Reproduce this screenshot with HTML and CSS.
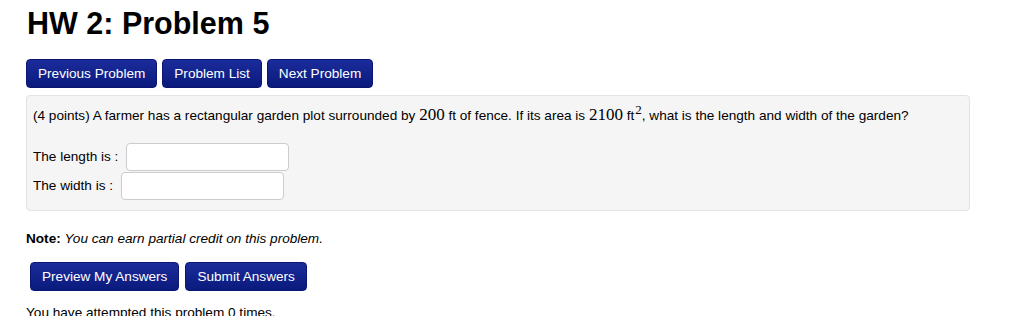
FILE: index.html
```html
<!DOCTYPE html>
<html lang="en">
<head>
    <meta charset="UTF-8">
    <title>HW 2: Problem 5</title>
    <link rel="stylesheet" href="styles.css">
</head>
<body>
    <div class="page">
        <h1 class="title">HW 2: Problem 5</h1>

        <div class="nav">
            <button class="btn">Previous Problem</button>
            <button class="btn">Problem List</button>
            <button class="btn">Next Problem</button>
        </div>

        <div class="problem">
            <p class="statement">
                (4 points) A farmer has a rectangular garden plot surrounded by <span class="math">200</span> ft of fence.
                If its area is <span class="math">2100</span> ft<sup>2</sup>, what is the length and width of the garden?
            </p>
            <div class="answer">
                <label>The length is :</label>
                <input type="text" class="answer-input">
            </div>
            <div class="answer">
                <label>The width is :</label>
                <input type="text" class="answer-input">
            </div>
        </div>

        <p class="note"><b>Note:</b> <i>You can earn partial credit on this problem.</i></p>

        <div class="submit-row">
            <button class="btn">Preview My Answers</button>
            <button class="btn">Submit Answers</button>
        </div>

        <p class="attempts">You have attempted this problem 0 times.</p>
    </div>
</body>
</html>
```

FILE: styles.css
```css
body {
    margin: 0;
    font-family: "Liberation Sans", Arial, sans-serif;
    font-size: 13.6px;
    color: #000;
    background: #fff;
}

.page {
    padding: 0 54px 0 26px;
}

.title {
    font-size: 30.5px;
    font-weight: bold;
    margin: 0;
    padding: 5px 0 0 1px;
    line-height: 36px;
}

.nav {
    display: flex;
    gap: 5px;
    margin-top: 18px;
}

.btn {
    font-family: "Liberation Sans", Arial, sans-serif;
    font-size: 13.6px;
    color: #fff;
    background: linear-gradient(#1b2c9c, #0a1a7c);
    border: 1px solid #0a1670;
    border-radius: 4px;
    height: 29px;
    padding: 0 11px;
    cursor: pointer;
}

.problem {
    margin-top: 7px;
    background: #f5f5f5;
    border: 1px solid #e3e3e3;
    border-radius: 4px;
    padding: 9px 6px 9px 6px;
    height: 96px;
}

.statement {
    margin: 0 0 16px;
    line-height: 20px;
}

.math {
    font-family: "Liberation Serif", "Times New Roman", serif;
    font-size: 17px;
}

sup {
    font-family: "Liberation Serif", "Times New Roman", serif;
    font-size: 13px;
    line-height: 0;
    vertical-align: 6px;
    margin-left: 1px;
}

.answer {
    display: flex;
    align-items: center;
    gap: 8px;
    height: 29px;
}

.answer-input {
    width: 163px;
    height: 28px;
    box-sizing: border-box;
    border: 1px solid #ccc;
    border-radius: 4px;
    background: #fff;
}

.note {
    margin: 20px 0 0;
}

.submit-row {
    display: flex;
    gap: 6px;
    margin: 16px 0 0 4px;
}

.attempts {
    margin: 14px 0 0;
}
```
